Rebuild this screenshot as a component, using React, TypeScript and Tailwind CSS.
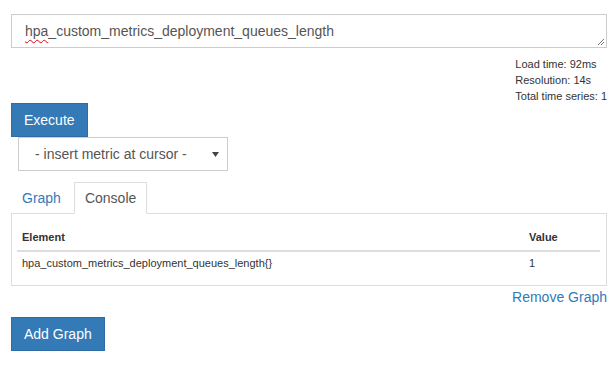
import { useState } from 'react';

const font = { fontFamily: '"Liberation Sans", Arial, Helvetica, sans-serif' };

export default function App() {
  const [tab, setTab] = useState<'graph' | 'console'>('console');
  const expr = 'hpa_custom_metrics_deployment_queues_length';

  return (
    <div className="w-[616px] h-[371px] bg-white text-[#333] text-[14px] leading-[20px] overflow-hidden" style={font}>
      <div className="pl-[11px] pr-[9px] pt-[14px]">
        {/* expression input */}
        <div className="relative h-[34px] border border-[#ccc] bg-white pl-[13px] pr-[12px] pt-[6px] text-[#555] text-[14px] leading-[20px]">
          <span className="underline decoration-wavy decoration-red-600 decoration-1 underline-offset-[3px]">hpa</span>
          {expr.slice(3)}
          <svg className="absolute right-[1px] bottom-[1px]" width="9" height="9" viewBox="0 0 9 9">
            <path d="M8 2 L2 8 M8 5 L5 8" stroke="#777" strokeWidth="1" />
          </svg>
        </div>

        {/* eval stats */}
        <div className="flex justify-end pt-[8px]">
          <div className="w-fit text-[11px] leading-[16px] text-[#333] whitespace-nowrap">
            <div>Load time: 92ms</div>
            <div>Resolution: 14s</div>
            <div>Total time series: 1</div>
          </div>
        </div>

        <button className="-mt-[1px] block h-[34px] px-[12px] bg-[#337ab7] border border-[#2e6da4] text-white text-[14px] leading-[20px]">
          Execute
        </button>

        <div className="ml-[7px] w-[210px] h-[34px] border border-[#ccc] bg-white flex items-center justify-between pl-[16px] pr-[8px] text-[#555]">
          <span>- insert metric at cursor -</span>
          <svg width="7" height="5" viewBox="0 0 7 5">
            <path d="M0 0 H7 L3.5 5 Z" fill="#444" />
          </svg>
        </div>

        {/* tabs */}
        <div className="mt-[11px] flex h-[31px]">
          <button
            onClick={() => setTab('graph')}
            className={`mr-[2px] px-[10px] h-[32px] border ${tab === 'graph' ? 'border-[#ddd] border-b-white bg-white text-[#555]' : 'border-transparent text-[#337ab7]'}`}
          >
            Graph
          </button>
          <button
            onClick={() => setTab('console')}
            className={`relative z-10 px-[10px] h-[32px] border ${tab === 'console' ? 'border-[#ddd] border-b-white bg-white text-[#555]' : 'border-transparent text-[#337ab7]'}`}
          >
            Console
          </button>
        </div>

        <div className="border border-[#ddd] h-[73px] pl-[5px] pr-[6px] pt-[10px]">
          <table className="w-full text-[11px] leading-[16px] text-left border-collapse">
            <thead>
              <tr className="border-b-2 border-[#ddd]">
                <th className="px-[5px] pt-[5px] pb-[5px] font-bold">Element</th>
                <th className="px-[5px] pt-[5px] pb-[5px] font-bold w-[76px]">Value</th>
              </tr>
            </thead>
            <tbody>
              <tr>
                <td className="px-[5px] py-[3px]">{expr}{'{}'}</td>
                <td className="px-[5px] py-[3px]">1</td>
              </tr>
            </tbody>
          </table>
        </div>

        <div className="flex justify-end">
          <a className="text-[#337ab7] leading-[22px] cursor-pointer">Remove Graph</a>
        </div>

        <button className="mt-[9px] block h-[34px] px-[12px] bg-[#337ab7] border border-[#2e6da4] text-white text-[14px] leading-[20px]">
          Add Graph
        </button>
      </div>
    </div>
  );
}
